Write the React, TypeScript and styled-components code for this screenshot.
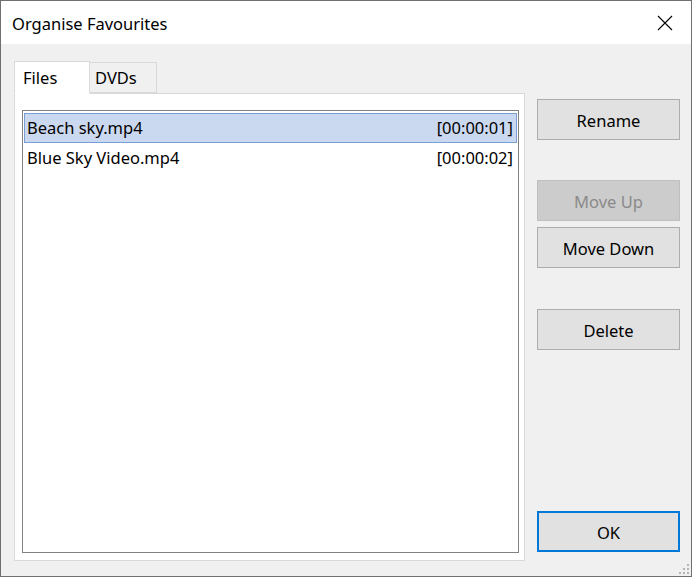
import React, { useState } from 'react'
import styled, { createGlobalStyle } from 'styled-components'

const GlobalStyle = createGlobalStyle`
  html, body {
    margin: 0;
    padding: 0;
    background: #ffffff;
  }
  body {
    font-family: 'Noto Sans', 'Open Sans', sans-serif;
    color: #000000;
  }
`

type Item = { name: string; duration: string }

const files: Item[] = [
  { name: 'Beach sky.mp4', duration: '[00:00:01]' },
  { name: 'Blue Sky Video.mp4', duration: '[00:00:02]' },
]

const App = () => {
  const [tab, setTab] = useState('files')
  const [selected, setSelected] = useState(0)

  return (
    <>
      <GlobalStyle />
      <StyledWindow>
        <StyledTitleBar>
          <StyledTitle>Organise Favourites</StyledTitle>
          <StyledClose aria-label="Close">
            <svg width="16" height="16" viewBox="0 0 16 16">
              <path d="M1 1 L15 15 M15 1 L1 15" stroke="#000" strokeWidth="1.1" fill="none" />
            </svg>
          </StyledClose>
        </StyledTitleBar>
        <StyledBody>
          <StyledTabArea>
            <StyledTabStrip>
              <StyledTab active={tab === 'files'} onClick={() => setTab('files')}>
                Files
              </StyledTab>
              <StyledTab active={tab === 'dvds'} onClick={() => setTab('dvds')}>
                DVDs
              </StyledTab>
            </StyledTabStrip>
            <StyledPanel>
              <StyledList>
                {files.map((f, i) => (
                  <StyledRow key={f.name} selected={i === selected} onClick={() => setSelected(i)}>
                    <span>{f.name}</span>
                    <span>{f.duration}</span>
                  </StyledRow>
                ))}
              </StyledList>
            </StyledPanel>
          </StyledTabArea>
          <StyledButtons>
            <StyledButton>Rename</StyledButton>
            <StyledGap size={40} />
            <StyledButton disabled>Move Up</StyledButton>
            <StyledGap size={6} />
            <StyledButton>Move Down</StyledButton>
            <StyledGap size={41} />
            <StyledButton>Delete</StyledButton>
            <StyledFill />
            <StyledButton primary>OK</StyledButton>
          </StyledButtons>
        </StyledBody>
        <StyledGrip>
          <svg width="12" height="12" viewBox="0 0 12 12">
            <rect x="9" y="1" width="2" height="2" fill="#b4b4b4" />
            <rect x="5" y="5" width="2" height="2" fill="#b4b4b4" />
            <rect x="9" y="5" width="2" height="2" fill="#b4b4b4" />
            <rect x="1" y="9" width="2" height="2" fill="#b4b4b4" />
            <rect x="5" y="9" width="2" height="2" fill="#b4b4b4" />
            <rect x="9" y="9" width="2" height="2" fill="#b4b4b4" />
          </svg>
        </StyledGrip>
      </StyledWindow>
    </>
  )
}

export default App

const StyledWindow = styled.div`
  position: relative;
  box-sizing: border-box;
  width: 692px;
  height: 577px;
  border: 1px solid #6f6f6f;
  background: #f0f0f0;
  display: flex;
  flex-direction: column;
`

const StyledTitleBar = styled.div`
  height: 43px;
  background: #ffffff;
  display: flex;
  align-items: center;
  justify-content: space-between;
  padding-left: 11px;
`

const StyledTitle = styled.div`
  font-size: 16.5px;
  color: #000000;
  padding-top: 1px;
`

const StyledClose = styled.div`
  width: 46px;
  height: 43px;
  display: flex;
  align-items: center;
  justify-content: center;
  margin-right: 3px;
`

const StyledBody = styled.div`
  flex: 1;
  display: flex;
  padding: 17px 11px 15px 13px;
  gap: 12px;
`

const StyledTabArea = styled.div`
  width: 511px;
  display: flex;
  flex-direction: column;
`

const StyledTabStrip = styled.div`
  display: flex;
  align-items: flex-end;
  height: 33px;
  position: relative;
  z-index: 1;
  margin-bottom: -1px;
`

const StyledTab = styled.div<{ active?: boolean }>`
  box-sizing: border-box;
  height: ${(p) => (p.active ? '33px' : '31px')};
  margin-bottom: ${(p) => (p.active ? '0' : '1px')};
  padding: ${(p) => (p.active ? '4px 0 0 8px' : '3px 0 0 5px')};
  width: ${(p) => (p.active ? '76px' : '68px')};
  margin-left: ${(p) => (p.active ? '0' : '-1px')};
  background: ${(p) => (p.active ? '#ffffff' : '#f0f0f0')};
  border: 1px solid #d9d9d9;
  border-bottom: ${(p) => (p.active ? '1px solid #ffffff' : '1px solid #d9d9d9')};
  font-size: 16.5px;
  color: #000000;
  cursor: default;
`

const StyledPanel = styled.div`
  flex: 1;
  box-sizing: border-box;
  background: #ffffff;
  border: 1px solid #d9d9d9;
  padding: 16px 5px 7px 7px;
  display: flex;
`

const StyledList = styled.div`
  flex: 1;
  border: 1px solid #828282;
  background: #ffffff;
  padding: 2px 1px;
`

const StyledRow = styled.div<{ selected?: boolean }>`
  box-sizing: border-box;
  height: 30px;
  display: flex;
  align-items: center;
  justify-content: space-between;
  padding: 0 3px 1px 2px;
  font-size: 16.5px;
  border: 1px solid ${(p) => (p.selected ? '#7b9fd4' : 'transparent')};
  background: ${(p) => (p.selected ? '#cbd9f0' : 'transparent')};
`

const StyledButtons = styled.div`
  width: 143px;
  display: flex;
  flex-direction: column;
  padding-top: 38px;
  padding-bottom: 9px;
`

const StyledButton = styled.button<{ primary?: boolean }>`
  box-sizing: border-box;
  width: 143px;
  height: 41px;
  flex-shrink: 0;
  font-family: 'Noto Sans', 'Open Sans', sans-serif;
  font-size: 16.5px;
  background: ${(p) => (p.disabled ? '#cccccc' : '#e1e1e1')};
  color: ${(p) => (p.disabled ? '#8a8a8a' : '#000000')};
  border: ${(p) => (p.primary ? '2px solid #0078d7' : p.disabled ? '1px solid #bfbfbf' : '1px solid #adadad')};
  padding: 1px 0 0;
  cursor: default;
`

const StyledGap = styled.div<{ size: number }>`
  height: ${(p) => p.size}px;
  flex-shrink: 0;
`

const StyledFill = styled.div`
  flex: 1;
`

const StyledGrip = styled.div`
  position: absolute;
  right: 1px;
  bottom: 1px;
  width: 12px;
  height: 12px;
  display: flex;
`
